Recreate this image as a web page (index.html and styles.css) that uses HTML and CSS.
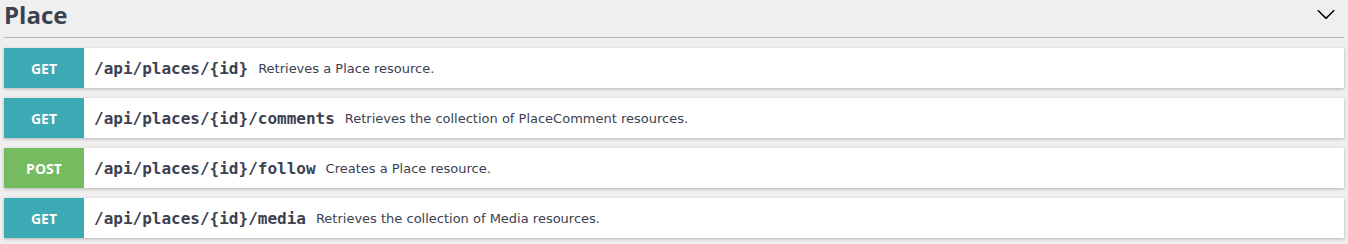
FILE: index.html
```html
<html>
  <head>
    <meta charset="UTF-8">
    <title>Place</title>
    <link rel="stylesheet" href="styles.css">
  </head>
  <body>
    <div class="tag-section">
      <div class="tag-header">
        <h4 class="tag-title">Place</h4>
        <svg class="tag-arrow" width="20" height="20" viewBox="0 0 20 20">
          <path d="M17.418 6.109c.272-.268.709-.268.979 0s.271.701 0 .969l-7.908 7.83c-.27.268-.707.268-.979 0l-7.908-7.83c-.27-.268-.27-.701 0-.969.271-.268.709-.268.979 0L10 13.25l7.418-7.141z"/>
        </svg>
      </div>

      <div class="opblock">
        <span class="method method-get">GET</span>
        <span class="path">/api/places/{id}</span>
        <span class="summary">Retrieves a Place resource.</span>
      </div>
      <div class="opblock">
        <span class="method method-get">GET</span>
        <span class="path">/api/places/{id}/comments</span>
        <span class="summary">Retrieves the collection of PlaceComment resources.</span>
      </div>
      <div class="opblock">
        <span class="method method-post">POST</span>
        <span class="path">/api/places/{id}/follow</span>
        <span class="summary">Creates a Place resource.</span>
      </div>
      <div class="opblock">
        <span class="method method-get">GET</span>
        <span class="path">/api/places/{id}/media</span>
        <span class="summary">Retrieves the collection of Media resources.</span>
      </div>
    </div>
  </body>
</html>
```

FILE: styles.css
```css
body {
  margin: 0;
  background-color: #efefef;
  color: #3b4151;
}
.tag-section {
  padding: 0 4px;
}
.tag-header {
  display: flex;
  align-items: flex-start;
  justify-content: space-between;
  height: 37px;
  border-bottom: 1px solid #b6b7bb;
  margin-bottom: 10px;
}
.tag-title {
  margin: 3px 0 0 0;
  font-family: "Open Sans", sans-serif;
  font-size: 24px;
  font-weight: 700;
  line-height: 24px;
}
.tag-arrow {
  margin: 4px 8px 0 0;
  fill: #000;
}
.opblock {
  display: flex;
  align-items: center;
  height: 40px;
  margin-bottom: 10px;
  background-color: #fff;
  box-shadow: 0 1px 3px rgba(0, 0, 0, 0.25);
}
.method {
  display: flex;
  align-items: center;
  justify-content: center;
  width: 80px;
  height: 40px;
  color: #fff;
  font-family: "Open Sans", sans-serif;
  font-size: 14px;
  font-weight: 700;
}
.method-get {
  background-color: #3ca9b4;
}
.method-post {
  background-color: #75bc60;
}
.path {
  margin-left: 10px;
  font-family: "DejaVu Sans Mono", monospace;
  font-size: 16px;
  font-weight: 700;
}
.summary {
  margin-left: 10px;
  font-family: "DejaVu Sans", sans-serif;
  font-size: 13px;
}
```
